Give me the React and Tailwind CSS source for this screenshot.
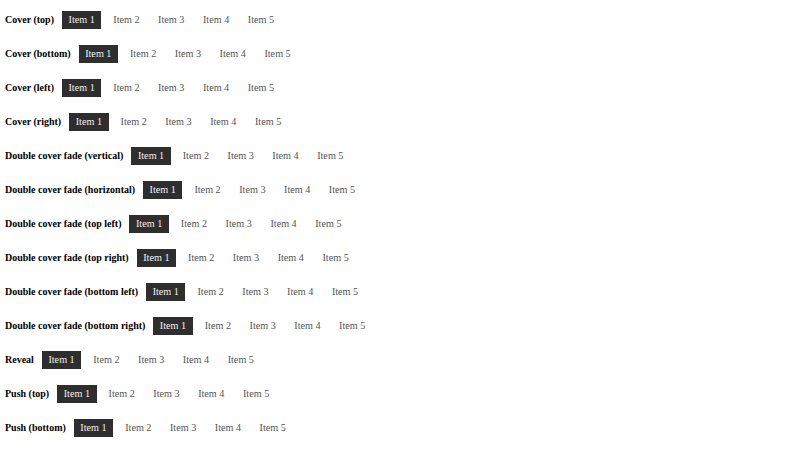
import React from 'react'

const rows = [
  'Cover (top)',
  'Cover (bottom)',
  'Cover (left)',
  'Cover (right)',
  'Double cover fade (vertical)',
  'Double cover fade (horizontal)',
  'Double cover fade (top left)',
  'Double cover fade (top right)',
  'Double cover fade (bottom left)',
  'Double cover fade (bottom right)',
  'Reveal',
  'Push (top)',
  'Push (bottom)',
]

const items = ['Item 1', 'Item 2', 'Item 3', 'Item 4', 'Item 5']

export default function App() {
  return (
    <div className="w-[800px] h-[450px] bg-white pt-[3px] overflow-hidden" style={{ fontFamily: '"Liberation Serif", serif' }}>
      {rows.map((label) => (
        <div key={label} className="flex items-center h-[34px] pl-[5px]">
          <span className="font-bold text-[10px] text-black mr-[8px] -mt-[2px]">{label}</span>
          <ul className="flex items-center">
            {items.map((it, i) => (
              <li
                key={it}
                className={
                  i === 0
                    ? 'h-[18px] flex items-center px-[6.5px] mr-[5.5px] bg-[#2e2e2e] text-[#f0f0f0] text-[10.2px]'
                    : 'h-[18px] flex items-center px-[6.5px] mr-[5.5px] text-[#555] text-[10.2px]'
                }
              >
                {it}
              </li>
            ))}
          </ul>
        </div>
      ))}
    </div>
  )
}
